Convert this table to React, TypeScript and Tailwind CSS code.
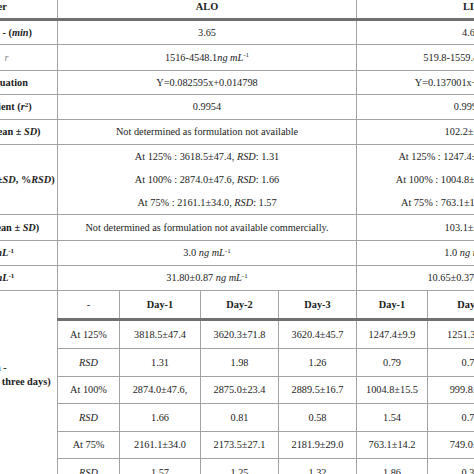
import React from "react"

const line = "border border-[#a3a3a3]"
const cell = `${line} p-0 text-center align-middle whitespace-nowrap`
const label = `${cell} font-bold`

function Unit() {
  return (
    <>
      <i>ng mL</i>
      <sup className="text-[7px]">-1</sup>
    </>
  )
}

function Acc({ rows }: { rows: [string, string, string][] }) {
  return (
    <div className="flex flex-col leading-[23px]">
      {rows.map(([at, val, rsd]) => (
        <div key={at}>
          At {at} : {val}, <i>RSD</i>: {rsd}
        </div>
      ))}
    </div>
  )
}

const precision = [
  ["At 125%", "3818.5±47.4", "3620.3±71.8", "3620.4±45.7", "1247.4±9.9", "1251.3±9.6", "1249.8±8.1"],
  ["RSD", "1.31", "1.98", "1.26", "0.79", "0.79", "0.65"],
  ["At 100%", "2874.0±47.6,", "2875.0±23.4", "2889.5±16.7", "1004.8±15.5", "999.8±7.5", "1001.2±9.4"],
  ["RSD", "1.66", "0.81", "0.58", "1.54", "0.75", "0.94"],
  ["At 75%", "2161.1±34.0", "2173.5±27.1", "2181.9±29.0", "763.1±14.2", "749.0±2.7", "752.6±6.3"],
  ["RSD", "1.57", "1.25", "1.32", "1.86", "0.36", "0.84"],
]
const heights = ["h-[29px]", "h-[28px]", "h-[27px]", "h-[28px]", "h-[27px]", "h-[28px]"]

export default function App() {
  return (
    <div
      className="w-[474px] h-[474px] overflow-hidden bg-white text-[10.3px] text-[#1c1c1c]"
      style={{ fontFamily: '"Liberation Serif", "Times New Roman", serif' }}
    >
      <table className="-ml-[91px] -mt-[6px] w-[670px] table-fixed border-collapse">
        <colgroup>
          <col className="w-[148px]" />
          <col className="w-[62px]" />
          <col className="w-[81px]" />
          <col className="w-[78px]" />
          <col className="w-[78px]" />
          <col className="w-[71px]" />
          <col className="w-[86px]" />
          <col className="w-[66px]" />
        </colgroup>
        <tbody>
          <tr className="h-[25px]">
            <td className={`${label} border-b-[3px] border-b-[#707070]`}>Parameter</td>
            <td colSpan={4} className={`${label} border-b-[3px] border-b-[#707070]`}>ALO</td>
            <td colSpan={3} className={`${label} border-b-[3px] border-b-[#707070] pl-[8px]`}>LIN</td>
          </tr>
          <tr className="h-[25px]">
            <td className={label}>
              Retention time - (<i>min</i>)
            </td>
            <td colSpan={4} className={cell}>3.65</td>
            <td colSpan={3} className={`${cell} pl-[6px]`}>4.60</td>
          </tr>
          <tr className="h-[26px]">
            <td className={label}>
              Linearity
              <i className="ml-[5px] font-normal text-[#8a8a8a]">r</i>
            </td>
            <td colSpan={4} className={cell}>
              1516-4548.1<Unit />
            </td>
            <td colSpan={3} className={cell}>
              519.8-1559.4 <Unit />
            </td>
          </tr>
          <tr className="h-[24px]">
            <td className={label}>Regression equation</td>
            <td colSpan={4} className={cell}>Y=0.082595x+0.014798</td>
            <td colSpan={3} className={cell}>Y=0.137001x+0.0193612</td>
          </tr>
          <tr className="h-[25px]">
            <td className={label}>
              Correl. coefficient (<i>r</i>
              <sup className="text-[7px]">2</sup>)
            </td>
            <td colSpan={4} className={cell}>0.9954</td>
            <td colSpan={3} className={cell}>0.9995</td>
          </tr>
          <tr className="h-[25px]">
            <td className={label}>
              Assay test (% mean ± <i>SD</i>)
            </td>
            <td colSpan={4} className={cell}>Not determined as formulation not available</td>
            <td colSpan={3} className={cell}>102.2±1.35</td>
          </tr>
          <tr className="h-[65px]">
            <td className={label}>
              Accuracy (% mean±<i>SD</i>, %<i>RSD</i>)
            </td>
            <td colSpan={4} className={cell}>
              <Acc
                rows={[
                  ["125%", "3618.5±47.4", "1.31"],
                  ["100%", "2874.0±47.6", "1.66"],
                  ["75%", "2161.1±34.0", "1.57"],
                ]}
              />
            </td>
            <td colSpan={3} className={cell}>
              <Acc
                rows={[
                  ["125%", "1247.4±9.9", "0.79"],
                  ["100%", "1004.8±15.5", "1.54"],
                  ["75%", "763.1±14.2", "1.86"],
                ]}
              />
            </td>
          </tr>
          <tr className="h-[26px]">
            <td className={label}>
              Recovery (% mean ± <i>SD</i>)
            </td>
            <td colSpan={4} className={cell}>
              Not determined as formulation not available commercially.
            </td>
            <td colSpan={3} className={cell}>103.1±2.14</td>
          </tr>
          <tr className="h-[25px]">
            <td className={label}>
              LOD, <i>ng mL</i>
              <sup className="text-[7px]">-1</sup>
            </td>
            <td colSpan={4} className={cell}>
              3.0 <Unit />
            </td>
            <td colSpan={3} className={cell}>
              1.0 <Unit />
            </td>
          </tr>
          <tr className="h-[25px]">
            <td className={label}>
              LOQ, <i>ng mL</i>
              <sup className="text-[7px]">-1</sup>
            </td>
            <td colSpan={4} className={cell}>
              31.80±0.87 <Unit />
            </td>
            <td colSpan={3} className={cell}>
              10.65±0.37 <Unit />
            </td>
          </tr>

          {/* precision block */}
          <tr className="h-[29px]">
            <td
              rowSpan={7}
              className={`${line} px-0 pt-[70px] text-center align-top whitespace-nowrap font-bold leading-[14px]`}
            >
              Precision -
              <br />
              Inter-day (% <i>RSD</i>, three days)
            </td>
            <td className={`${cell} border-b-[3px] border-b-[#707070]`}>-</td>
            {["Day-1", "Day-2", "Day-3", "Day-1", "Day-2", "Day-3"].map((d, i) => (
              <td key={i} className={`${label} border-b-[3px] border-b-[#707070]`}>
                {d}
              </td>
            ))}
          </tr>
          {precision.map((row, r) => (
            <tr key={r} className={heights[r]}>
              {row.map((v, i) => (
                <td key={i} className={cell}>
                  {v === "RSD" ? <i>RSD</i> : v}
                </td>
              ))}
            </tr>
          ))}
        </tbody>
      </table>
    </div>
  )
}
